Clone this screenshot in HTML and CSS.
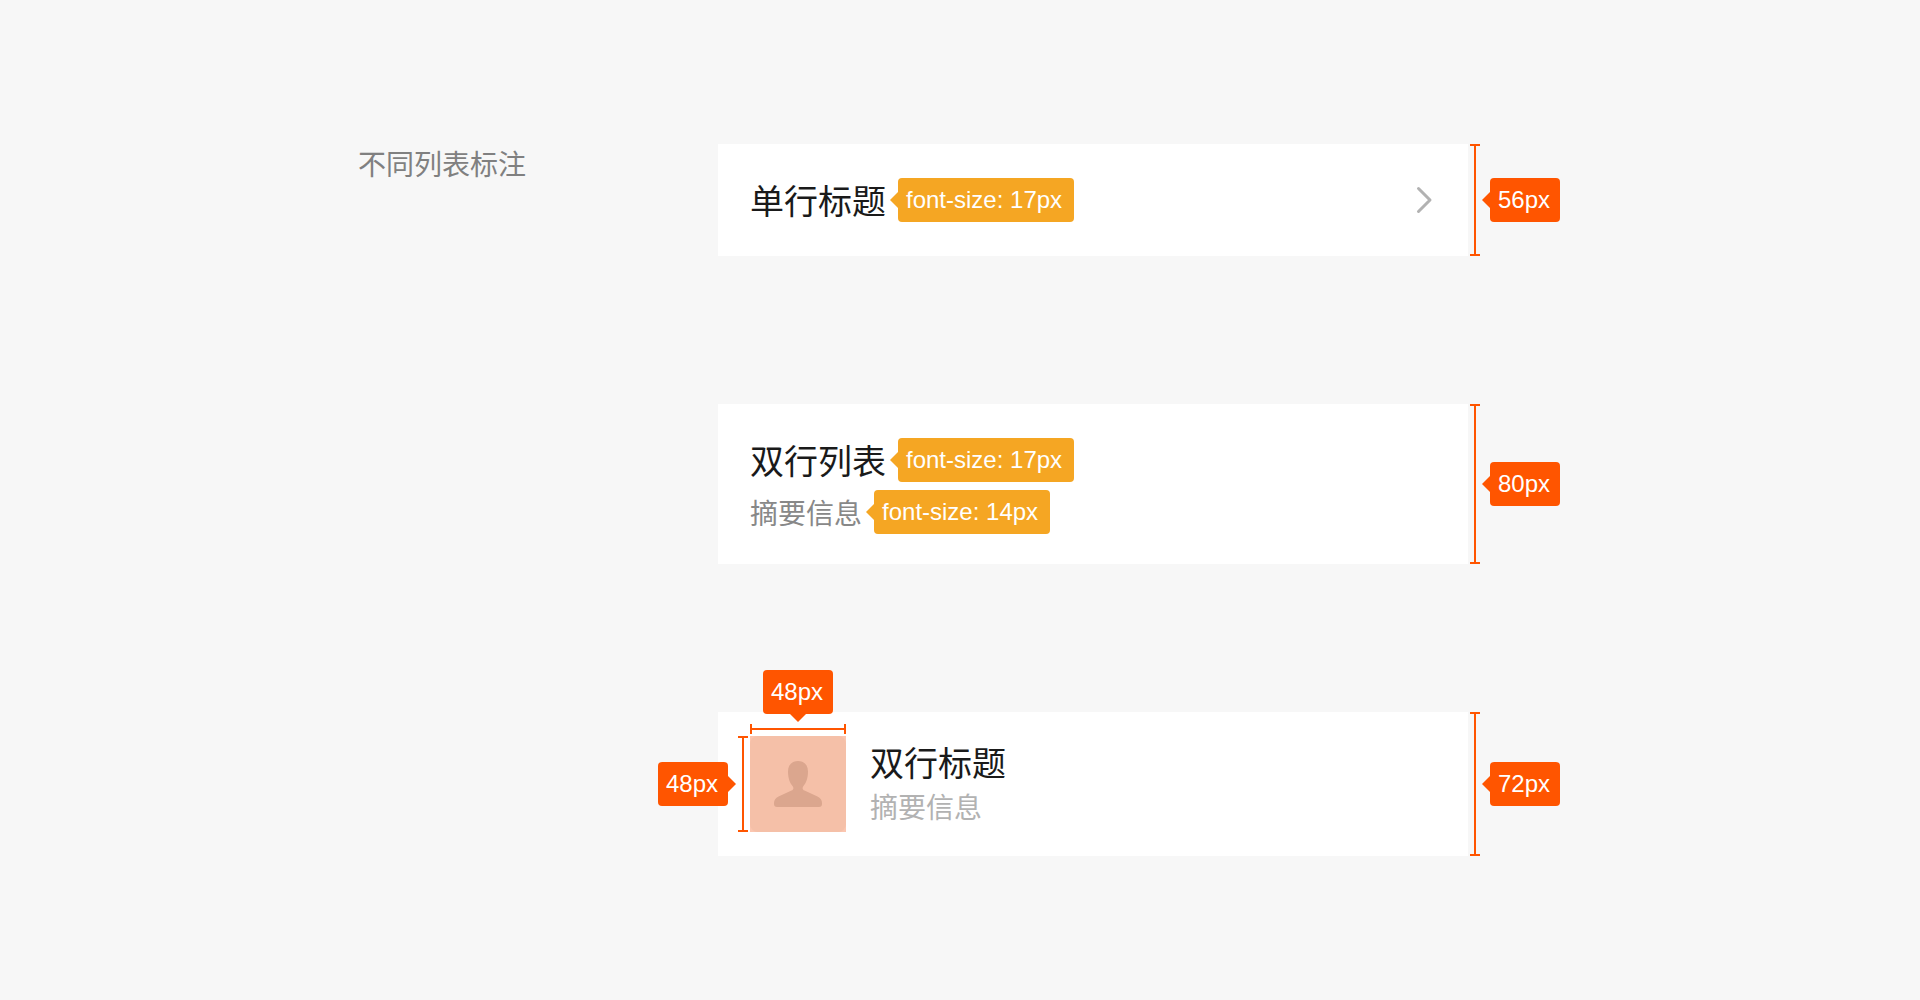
FILE: index.html
```html
<!DOCTYPE html>
<html lang="zh-CN">
<head>
    <meta charset="UTF-8">
    <meta name="viewport" content="width=device-width, initial-scale=1.0">
    <title>不同列表标注</title>
    <link rel="stylesheet" href="styles.css">
</head>
<body>

<main class="spec">
    <h1 class="spec-title">不同列表标注</h1>

    <div class="spec-list">
        <!-- 单行 -->
        <div class="spec-item">
            <a class="cell" href="#">
                <div class="cell-row">
                    <span class="title">单行标题</span>
                    <span class="tag tag-font">font-size: 17px</span>
                </div>
                <svg class="chevron" width="20" height="28" viewBox="0 0 20 28" aria-hidden="true">
                    <path d="M2.500 2.500L14 14 2.500 25.500"/>
                </svg>
            </a>
            <div class="measure">
                <span class="ruler"></span>
                <span class="tag">56px</span>
            </div>
        </div>

        <!-- 双行 -->
        <div class="spec-item">
            <div class="cell cell-double">
                <div class="cell-row">
                    <span class="title">双行列表</span>
                    <span class="tag tag-font">font-size: 17px</span>
                </div>
                <div class="cell-row">
                    <span class="desc">摘要信息</span>
                    <span class="tag tag-font">font-size: 14px</span>
                </div>
            </div>
            <div class="measure">
                <span class="ruler"></span>
                <span class="tag">80px</span>
            </div>
        </div>

        <!-- 双行 + 头像 -->
        <div class="spec-item">
            <div class="cell cell-avatar">
                <div class="avatar">
                    <svg class="person" viewBox="0 0 96 96" aria-hidden="true">
                        <path d="M48 25c6 0 10 4 10 10.500 0 7-2 11.500-4.500 14.500-1.500 2-1 3.500 1 4.500l13 6c3 1.500 4.500 3.500 4.500 6.500v1c0 2-1 3-3 3H27c-2 0-3-1-3-3v-1c0-3 1.500-5 4.500-6.500l13-6c2-1 2.500-2.500 1-4.500-2.500-3-4.500-7.500-4.500-14.500C38 29 42 25 48 25z"/>
                    </svg>
                    <div class="measure-top">
                        <span class="tag tag-down">48px</span>
                        <span class="ruler ruler-h"></span>
                    </div>
                    <div class="measure-left">
                        <span class="tag tag-right">48px</span>
                        <span class="ruler"></span>
                    </div>
                </div>
                <div class="cell-text">
                    <div class="title">双行标题</div>
                    <div class="desc desc-light">摘要信息</div>
                </div>
            </div>
            <div class="measure">
                <span class="ruler"></span>
                <span class="tag">72px</span>
            </div>
        </div>
    </div>
</main>

</body>
</html>
```
FILE: styles.css
```css
* { box-sizing: border-box; }
body { margin: 0; background: #f7f7f7; font-family: "Noto Sans CJK SC", sans-serif; color: #1a1a1a; }

.spec { display: grid; grid-template-columns: 360px 1fr; max-width: 1204px; margin: 0 auto; padding: 144px 0; }
.spec-title { margin: 0; font-size: 28px; font-weight: normal; line-height: 38px; color: #808080; }
.spec-list { display: flex; flex-direction: column; gap: 148px; }
.spec-item { display: flex; }

/* 列表单元 */
.cell { flex: 1; display: flex; align-items: center; justify-content: space-between; padding: 34px 32px; background: #fff; color: inherit; text-decoration: none; }
.cell-double { flex-direction: column; align-items: flex-start; gap: 8px; padding-bottom: 30px; }
.cell-avatar { justify-content: flex-start; gap: 24px; padding: 24px 32px; }
.cell-row { display: flex; align-items: center; gap: 12px; }
.title { font-size: 34px; line-height: 44px; }
.desc { font-size: 28px; line-height: 44px; color: #888; }
.desc-light { color: #b2b2b2; }
.chevron { fill: none; stroke: #b2b2b2; stroke-width: 3; stroke-linecap: round; stroke-linejoin: round; }

.avatar { position: relative; width: 96px; height: 96px; background: #fbc6b0; }
.person { display: block; border-radius: 8px; background: #f5c0a8; fill: #dba68e; }

/* 标签 */
.tag { --tag-bg: #ff5500; position: relative; min-width: 70px; height: 44px; padding: 0 8px; border-radius: 4px; background: var(--tag-bg); color: #fff; font-family: "Liberation Sans", sans-serif; font-size: 24px; line-height: 44px; white-space: nowrap; }
.tag-font { --tag-bg: #f5a623; min-width: 176px; }
.tag::before { content: ""; position: absolute; top: 14px; right: 100%; border: 8px solid transparent; border-left-width: 0; border-right-color: var(--tag-bg); }
.tag-right::before { right: auto; left: 100%; border-width: 8px 0 8px 8px; border-color: transparent; border-left-color: var(--tag-bg); }
.tag-down::before { top: 100%; right: auto; left: calc(50% - 8px); border-width: 8px 8px 0; border-color: transparent; border-top-color: var(--tag-bg); }

/* 标尺 */
.ruler { align-self: stretch; width: 10px; background: linear-gradient(#ff5500, #ff5500) center / 2px 100% no-repeat; border: solid #ff5500; border-width: 2px 0; }
.ruler-h { width: auto; height: 10px; background-size: 100% 2px; border-width: 0 2px; }

.measure { display: flex; align-items: center; gap: 10px; width: 94px; padding-left: 2px; }
.measure-top { position: absolute; left: 0; right: 0; bottom: 100%; display: flex; flex-direction: column; align-items: center; gap: 10px; padding-bottom: 2px; }
.measure-left { position: absolute; top: 0; bottom: 0; right: 100%; display: flex; align-items: center; gap: 10px; padding-right: 2px; }
```
